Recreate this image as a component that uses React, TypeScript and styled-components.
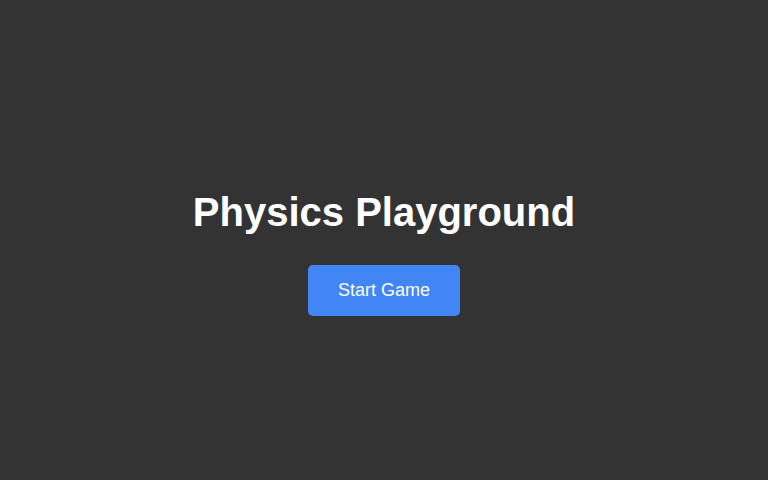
import styled, { createGlobalStyle } from 'styled-components';

const GlobalStyle = createGlobalStyle`
    html,
    body {
        margin: 0;
        padding: 0;
        background: #333333;
        font-family: 'Liberation Sans', Arial, sans-serif;
    }
`;

const Screen = styled.div`
    display: flex;
    flex-direction: column;
    align-items: center;
    justify-content: center;
    height: 100vh;
    color: #ffffff;
`;

const Title = styled.h1`
    font-size: 40px;
    font-weight: bold;
    margin: 0.67em 0 30px;
`;

const StartButton = styled.button`
    padding: 15px 30px;
    font-family: inherit;
    font-size: 18px;
    color: #ffffff;
    background: #4285f4;
    border: none;
    border-radius: 5px;
    cursor: pointer;

    &:hover {
        background: #3574e0;
    }
`;

export default function App() {
    return (
        <>
            <GlobalStyle />
            <Screen>
                <Title>Physics Playground</Title>
                <StartButton>Start Game</StartButton>
            </Screen>
        </>
    );
}
